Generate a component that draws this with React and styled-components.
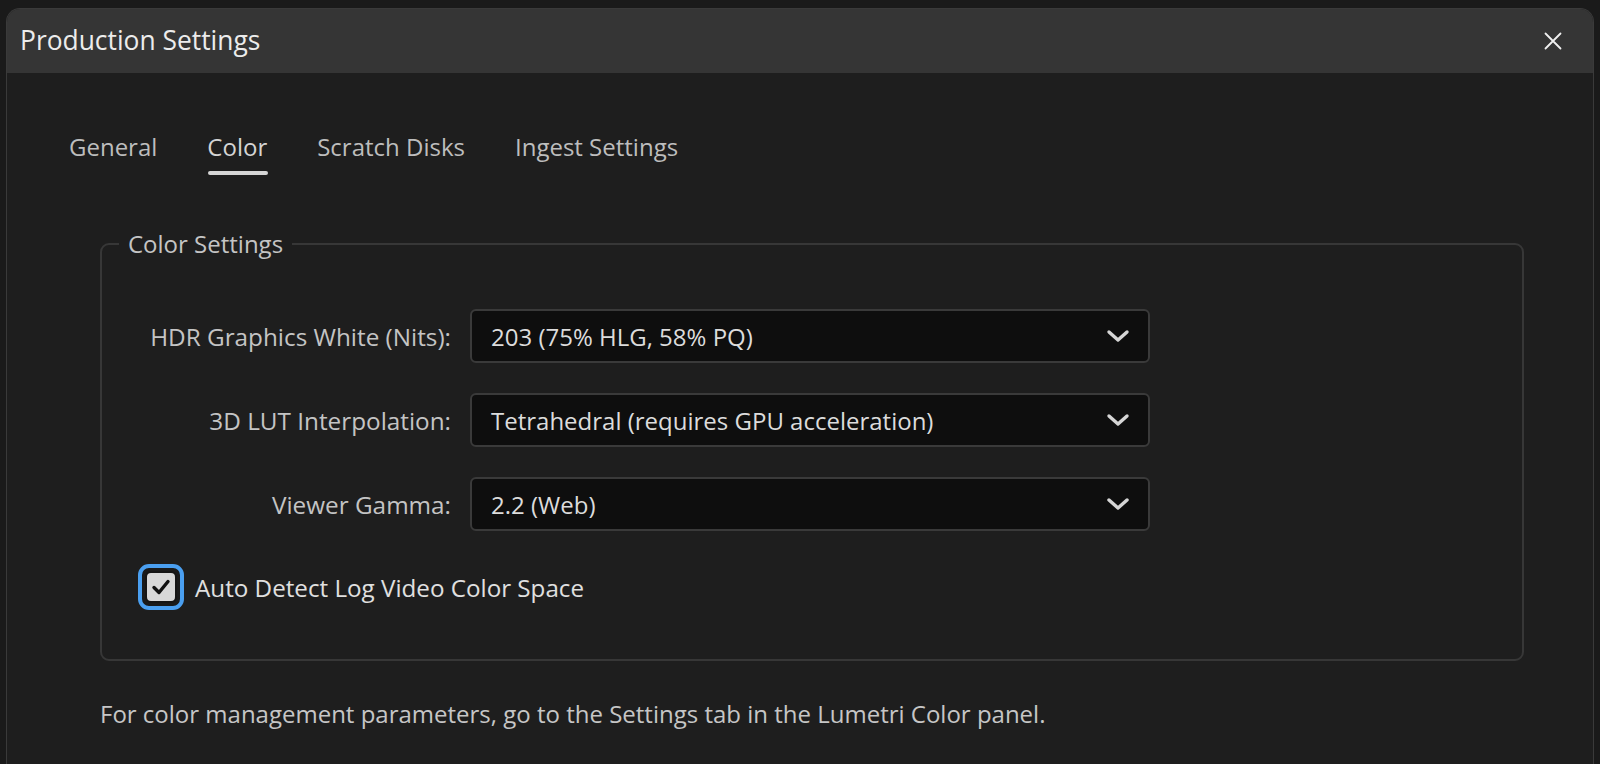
import React, { useState } from "react";
import styled, { createGlobalStyle } from "styled-components";

const GlobalStyle = createGlobalStyle`
  html, body {
    margin: 0;
    padding: 0;
    background: #1a1a1a;
    height: 100%;
  }
  #root {
    height: 100%;
  }
  * {
    box-sizing: border-box;
  }
`;

const Page = styled.div`
  height: 764px;
  width: 1600px;
  padding: 8px 6px 0 6px;
  display: flex;
  font-family: "Open Sans", "Lato", sans-serif;
  overflow: hidden;
`;

const Dialog = styled.div`
  flex: 1;
  display: flex;
  flex-direction: column;
  border-radius: 14px 14px 0 0;
  background: #1e1e1e;
  border: 1px solid #3a3a3a;
  border-bottom: 0;
  overflow: hidden;
`;

const TitleBar = styled.div`
  height: 64px;
  flex-shrink: 0;
  background: #353535;
  display: flex;
  align-items: center;
  justify-content: space-between;
  padding: 0 30px 0 13px;
`;

const Title = styled.div`
  color: #ececec;
  font-size: 26.4px;
  padding-bottom: 2px;
`;

const CloseButton = styled.button`
  background: none;
  border: 0;
  padding: 0;
  width: 20px;
  height: 20px;
  display: flex;
  align-items: center;
  justify-content: center;
  cursor: pointer;
`;

const Body = styled.div`
  flex: 1;
  display: flex;
  flex-direction: column;
  padding: 57px 0 0 93px;
`;

const Tabs = styled.div`
  display: flex;
  gap: 50px;
  margin-left: -31px;
`;

const Tab = styled.button`
  background: none;
  border: 0;
  padding: 0 0 12px 0;
  font-family: inherit;
  font-size: 24px;
  color: ${({ active }) => (active ? "#d4d4d4" : "#bdbdbd")};
  position: relative;
  cursor: pointer;

  &::after {
    content: "";
    position: absolute;
    left: 1px;
    right: -1px;
    bottom: 0;
    height: 4px;
    border-radius: 2px;
    background: ${({ active }) => (active ? "#d6d6d6" : "transparent")};
  }
`;

const Fieldset = styled.fieldset`
  margin: 52px 0 0 0;
  width: 1424px;
  height: 434px;
  border: 2px solid #373737;
  border-radius: 9px;
  padding: 0;
  min-width: 0;
`;

const Legend = styled.legend`
  color: #c4c4c4;
  font-size: 24px;
  padding: 0 9px;
  margin-left: 17px;
`;

const Content = styled.div`
  padding: 49px 0 0 36px;
`;

const Rows = styled.div`
  display: flex;
  flex-direction: column;
  gap: 30px;
`;

const Row = styled.div`
  display: grid;
  grid-template-columns: 313px 680px;
  column-gap: 19px;
  align-items: center;
`;

const Label = styled.div`
  text-align: right;
  color: #c4c4c4;
  font-size: 24.3px;
`;

const Select = styled.div`
  height: 54px;
  background: #0e0e0e;
  border: 2px solid #3a3a3a;
  border-radius: 6px;
  display: flex;
  align-items: center;
  justify-content: space-between;
  padding: 0 18px 0 19px;
  color: #dcdcdc;
  font-size: 24px;
  cursor: pointer;
`;

const CheckRow = styled.label`
  display: flex;
  align-items: center;
  gap: 11px;
  margin-top: 33px;
  color: #e0e0e0;
  font-size: 24.2px;
  cursor: pointer;
`;

const FocusRing = styled.span`
  width: 46px;
  height: 46px;
  border: 4.5px solid #4a9ff0;
  border-radius: 11px;
  display: flex;
  align-items: center;
  justify-content: center;
  background: #1a1a1a;
`;

const Box = styled.span`
  width: 32px;
  height: 32px;
  border-radius: 6px;
  border: 2px solid #151515;
  background: ${({ checked }) => (checked ? "#d8d8d8" : "transparent")};
  display: flex;
  align-items: center;
  justify-content: center;
`;

const Footnote = styled.div`
  margin-top: 36px;
  color: #c6c6c6;
  font-size: 24px;
`;

const Chevron = () => (
  <svg width="24" height="16" viewBox="0 0 24 16">
    <path
      d="M3 4 L12 12 L21 4"
      fill="none"
      stroke="#d6d6d6"
      strokeWidth="3.4"
      strokeLinecap="round"
      strokeLinejoin="round"
    />
  </svg>
);

const settings = [
  { label: "HDR Graphics White (Nits):", value: "203 (75% HLG, 58% PQ)" },
  { label: "3D LUT Interpolation:", value: "Tetrahedral (requires GPU acceleration)" },
  { label: "Viewer Gamma:", value: "2.2 (Web)" },
];

const tabs = ["General", "Color", "Scratch Disks", "Ingest Settings"];

export default function App() {
  const [activeTab, setActiveTab] = useState("Color");
  const [autoDetect, setAutoDetect] = useState(true);

  return (
    <>
      <GlobalStyle />
      <Page>
        <Dialog>
          <TitleBar>
            <Title>Production Settings</Title>
            <CloseButton aria-label="Close">
              <svg width="18" height="18" viewBox="0 0 18 18">
                <path d="M1.5 1.5 L16.5 16.5 M16.5 1.5 L1.5 16.5" stroke="#f0f0f0" strokeWidth="1.8" strokeLinecap="round" />
              </svg>
            </CloseButton>
          </TitleBar>
          <Body>
            <Tabs>
              {tabs.map((t) => (
                <Tab key={t} active={activeTab === t} onClick={() => setActiveTab(t)}>
                  {t}
                </Tab>
              ))}
            </Tabs>
            <Fieldset>
              <Legend>Color Settings</Legend>
              <Content>
                <Rows>
                  {settings.map((s) => (
                    <Row key={s.label}>
                      <Label>{s.label}</Label>
                      <Select>
                        <span>{s.value}</span>
                        <Chevron />
                      </Select>
                    </Row>
                  ))}
                </Rows>
                <CheckRow onClick={() => setAutoDetect(!autoDetect)}>
                  <FocusRing>
                    <Box checked={autoDetect}>
                      {autoDetect && (
                        <svg width="20" height="18" viewBox="0 0 20 18">
                          <path d="M3 9.5 L8 14.5 L17 3.5" fill="none" stroke="#111" strokeWidth="3.4" strokeLinecap="round" strokeLinejoin="round" />
                        </svg>
                      )}
                    </Box>
                  </FocusRing>
                  Auto Detect Log Video Color Space
                </CheckRow>
              </Content>
            </Fieldset>
            <Footnote>
              For color management parameters, go to the Settings tab in the Lumetri Color panel.
            </Footnote>
          </Body>
        </Dialog>
      </Page>
    </>
  );
}
